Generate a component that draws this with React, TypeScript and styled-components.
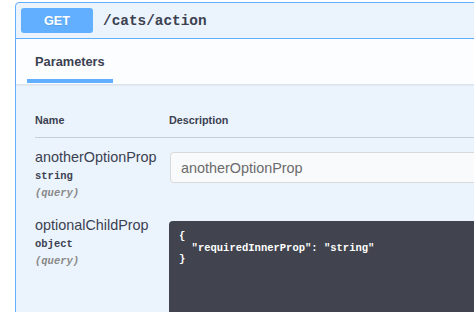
import React from "react";
import styled, { createGlobalStyle } from "styled-components";

const GlobalStyle = createGlobalStyle`
  html, body {
    margin: 0;
    padding: 0;
    background: #ffffff;
    overflow: hidden;
  }

  body {
    font-family: "Liberation Sans", Arial, sans-serif;
    color: #3b4151;
  }
`;

const Page = styled.div`
  width: 474px;
  height: 312px;
  overflow: hidden;
  padding: 2px 0 0 15px;
  box-sizing: border-box;
`;

const Opblock = styled.section`
  width: 540px;
  border: 1px solid #61affe;
  border-radius: 4px;
  background: #ebf3fc;
  min-height: 340px;
`;

const Summary = styled.div`
  display: flex;
  align-items: center;
  padding: 5px;
  border-bottom: 1px solid #61affe;
`;

const Method = styled.span`
  display: flex;
  align-items: center;
  justify-content: center;
  width: 72px;
  height: 25px;
  border-radius: 3px;
  background: #61affe;
  color: #ffffff;
  font-size: 12.6px;
  font-weight: 700;
  text-shadow: 0 1px 0 rgba(0, 0, 0, 0.1);
`;

const Path = styled.span`
  margin-left: 10px;
  font-family: "Liberation Mono", "Courier New", monospace;
  font-size: 14.4px;
  font-weight: 700;
  color: #3b4151;
`;

const TabHeader = styled.div`
  display: flex;
  padding: 0 11px 1px;
  background: rgba(255, 255, 255, 0.8);
  box-shadow: 0 1px 2px rgba(0, 0, 0, 0.1);
`;

const Tab = styled.h4`
  margin: 0;
  padding: 15px 8px 9px;
  font-size: 12.8px;
  line-height: 16px;
  font-weight: 700;
  color: #3b4151;
  border-bottom: 4px solid #61affe;
`;

const TableContainer = styled.div`
  padding: 29px 20px 0 19px;
`;

const Grid = styled.div`
  display: grid;
  grid-template-columns: 134px 1fr;
`;

const HeadCell = styled.div`
  font-size: 10.8px;
  line-height: 14px;
  font-weight: 700;
  padding-bottom: 10px;
  border-bottom: 1px solid rgba(59, 65, 81, 0.2);
`;

const NameCell = styled.div`
  padding: 10px 0 7px;
`;

const DescCell = styled.div`
  padding: 10px 0 7px;
`;

const ParamName = styled.div`
  font-size: 14.4px;
  line-height: 18px;
  color: #3b4151;
`;

const ParamMeta = styled.div<{ $italic?: boolean }>`
  padding-top: ${({ $italic }) => ($italic ? "5px" : "4px")};
  font-family: "Liberation Mono", "Courier New", monospace;
  font-size: 10.5px;
  line-height: 12px;
  font-weight: 700;
  font-style: ${({ $italic }) => ($italic ? "italic" : "normal")};
  color: ${({ $italic }) => ($italic ? "#888888" : "#3b4151")};
`;

const TextInput = styled.div`
  margin: 4px 0 0 1px;
  height: 29px;
  display: flex;
  align-items: center;
  padding-left: 10px;
  background: #f9fafb;
  border: 1px solid #d9d9d9;
  border-radius: 4px;
  font-size: 14.4px;
  color: #6b6b6b;
`;

const CodeArea = styled.pre`
  margin: 5px 0 0;
  height: 110px;
  padding: 10px 10px;
  background: #41444e;
  border-radius: 4px;
  font-family: "Liberation Mono", "Courier New", monospace;
  font-size: 10.5px;
  line-height: 11.7px;
  font-weight: 700;
  color: #ffffff;
  white-space: pre;
`;

type Param = {
  name: string;
  type: string;
  location: string;
  kind: "input" | "json";
  value: string;
};

const params: Param[] = [
  {
    name: "anotherOptionProp",
    type: "string",
    location: "(query)",
    kind: "input",
    value: "anotherOptionProp",
  },
  {
    name: "optionalChildProp",
    type: "object",
    location: "(query)",
    kind: "json",
    value: '{\n  "requiredInnerProp": "string"\n}',
  },
];

const App: React.FC = () => {
  return (
    <>
      <GlobalStyle />
      <Page>
        <Opblock>
          <Summary>
            <Method>GET</Method>
            <Path>/cats/action</Path>
          </Summary>
          <TabHeader>
            <Tab>Parameters</Tab>
          </TabHeader>
          <TableContainer>
            <Grid>
              <HeadCell>Name</HeadCell>
              <HeadCell>Description</HeadCell>
              {params.map((p) => (
                <React.Fragment key={p.name}>
                  <NameCell>
                    <ParamName>{p.name}</ParamName>
                    <ParamMeta>{p.type}</ParamMeta>
                    <ParamMeta $italic>{p.location}</ParamMeta>
                  </NameCell>
                  <DescCell>
                    {p.kind === "input" ? (
                      <TextInput>{p.value}</TextInput>
                    ) : (
                      <CodeArea>{p.value}</CodeArea>
                    )}
                  </DescCell>
                </React.Fragment>
              ))}
            </Grid>
          </TableContainer>
        </Opblock>
      </Page>
    </>
  );
};

export default App;
